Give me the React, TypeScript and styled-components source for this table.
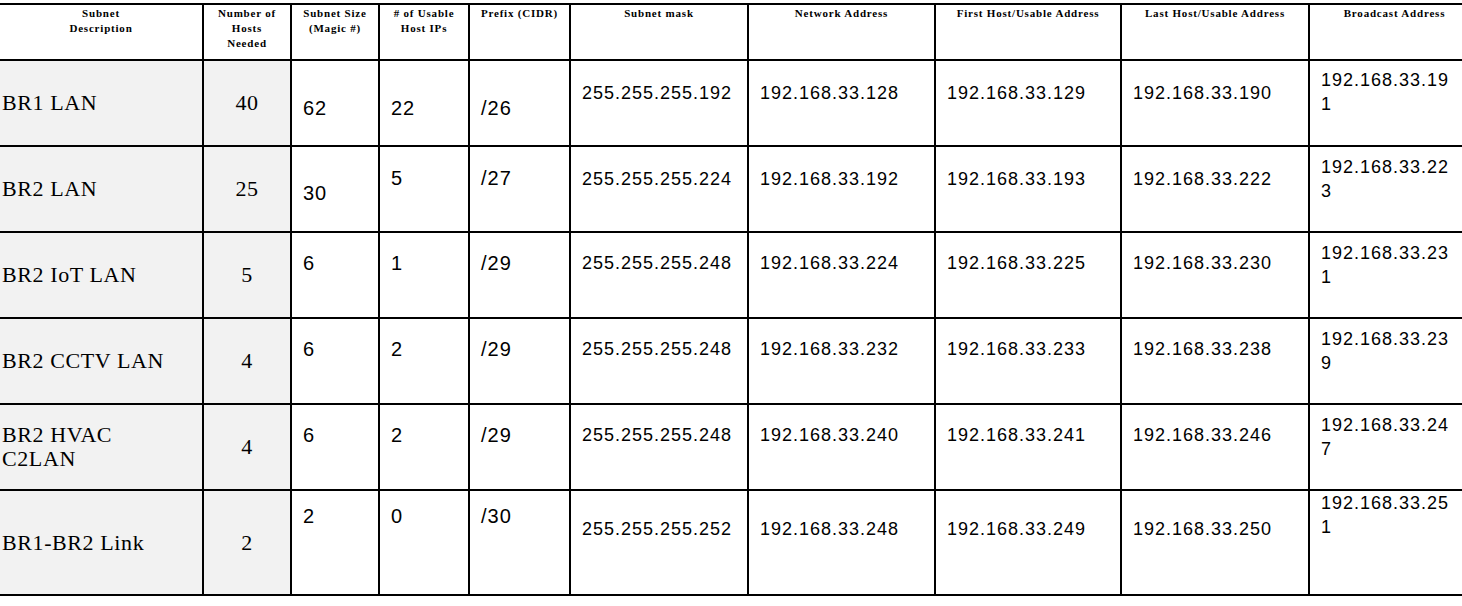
import styled, { createGlobalStyle } from 'styled-components';

const GlobalStyle = createGlobalStyle`
  html, body {
    margin: 0;
    padding: 0;
    background: #ffffff;
    overflow: hidden;
  }
`;

type Subnet = {
  desc: string[];
  hosts: string;
  size: string;
  usable: string;
  prefix: string;
  mask: string;
  network: string;
  first: string;
  last: string;
  broadcast: string;
  height: number;
  // vertical centre of the first text line, measured from the row's top rule
  tops: { size: number; usable: number; prefix: number; addr: number; bc: number };
};

const subnets: Subnet[] = [
  {
    desc: ['BR1 LAN'],
    hosts: '40',
    size: '62',
    usable: '22',
    prefix: '/26',
    mask: '255.255.255.192',
    network: '192.168.33.128',
    first: '192.168.33.129',
    last: '192.168.33.190',
    broadcast: '192.168.33.191',
    height: 86,
    tops: { size: 48, usable: 48, prefix: 48, addr: 33, bc: 20 },
  },
  {
    desc: ['BR2 LAN'],
    hosts: '25',
    size: '30',
    usable: '5',
    prefix: '/27',
    mask: '255.255.255.224',
    network: '192.168.33.192',
    first: '192.168.33.193',
    last: '192.168.33.222',
    broadcast: '192.168.33.223',
    height: 86,
    tops: { size: 47, usable: 32, prefix: 32, addr: 33, bc: 21 },
  },
  {
    desc: ['BR2 IoT LAN'],
    hosts: '5',
    size: '6',
    usable: '1',
    prefix: '/29',
    mask: '255.255.255.248',
    network: '192.168.33.224',
    first: '192.168.33.225',
    last: '192.168.33.230',
    broadcast: '192.168.33.231',
    height: 86,
    tops: { size: 31, usable: 31, prefix: 31, addr: 31, bc: 21 },
  },
  {
    desc: ['BR2 CCTV LAN'],
    hosts: '4',
    size: '6',
    usable: '2',
    prefix: '/29',
    mask: '255.255.255.248',
    network: '192.168.33.232',
    first: '192.168.33.233',
    last: '192.168.33.238',
    broadcast: '192.168.33.239',
    height: 86,
    tops: { size: 31, usable: 31, prefix: 31, addr: 31, bc: 21 },
  },
  {
    desc: ['BR2 HVAC', 'C2LAN'],
    hosts: '4',
    size: '6',
    usable: '2',
    prefix: '/29',
    mask: '255.255.255.248',
    network: '192.168.33.240',
    first: '192.168.33.241',
    last: '192.168.33.246',
    broadcast: '192.168.33.247',
    height: 86,
    tops: { size: 31, usable: 31, prefix: 31, addr: 31, bc: 21 },
  },
  {
    desc: ['BR1-BR2 Link'],
    hosts: '2',
    size: '2',
    usable: '0',
    prefix: '/30',
    mask: '255.255.255.252',
    network: '192.168.33.248',
    first: '192.168.33.249',
    last: '192.168.33.250',
    broadcast: '192.168.33.251',
    height: 105,
    tops: { size: 26, usable: 26, prefix: 26, addr: 39, bc: 13 },
  },
];

const columns = [
  { label: ['Subnet', 'Description'], width: 203 },
  { label: ['Number of', 'Hosts', 'Needed'], width: 88 },
  { label: ['Subnet Size', '(Magic #)'], width: 88 },
  { label: ['# of Usable', 'Host IPs'], width: 90 },
  { label: ['Prefix (CIDR)'], width: 101 },
  { label: ['Subnet mask'], width: 178 },
  { label: ['Network Address'], width: 187 },
  { label: ['First Host/Usable Address'], width: 186 },
  { label: ['Last Host/Usable Address'], width: 188 },
  { label: ['Broadcast Address'], width: 170 },
];

const Table = styled.table`
  margin-top: 3px;
  border-collapse: collapse;
  table-layout: fixed;
  width: ${columns.reduce((s, c) => s + c.width, 0)}px;
  color: #000;

  th,
  td {
    border: 2px solid #000;
  }
  th:first-child,
  td:first-child {
    border-left: none;
  }
  th:last-child,
  td:last-child {
    border-right: none;
  }
`;

const HeadRow = styled.tr`
  height: 56px;
`;

const HeadCell = styled.th`
  padding: 1px 4px 0;
  vertical-align: top;
  text-align: center;
  font-family: 'Liberation Serif', 'Times New Roman', serif;
  font-weight: 700;
  font-size: 11px;
  line-height: 15px;
  letter-spacing: 0.8px;
`;

const BodyRow = styled.tr<{ $height: number }>`
  height: ${(p) => p.$height}px;
`;

const DescCell = styled.td`
  background: #f2f2f2;
  padding: 0 0 0 2px;
  vertical-align: middle;
  font-family: 'Liberation Serif', 'Times New Roman', serif;
  font-size: 22px;
  line-height: 24px;
  letter-spacing: 0.6px;
`;

const HostsCell = styled(DescCell)`
  padding: 0;
  text-align: center;
`;

const ValueCell = styled.td<{ $top: number; $size?: number }>`
  padding: ${(p) => Math.max(0, p.$top - 13)}px 4px 0 11px;
  vertical-align: top;
  font-family: 'Liberation Sans', Arial, Helvetica, sans-serif;
  font-size: ${(p) => p.$size ?? 18}px;
  line-height: 24px;
  letter-spacing: 1px;
  white-space: nowrap;
`;

const BroadcastText = styled.span`
  display: block;
  width: 134px;
  white-space: normal;
  word-break: break-all;
`;

export default function App() {
  return (
    <>
      <GlobalStyle />
      <Table>
        <colgroup>
          {columns.map((c) => (
            <col key={c.label.join(' ')} style={{ width: c.width }} />
          ))}
        </colgroup>
        <thead>
          <HeadRow>
            {columns.map((c) => (
              <HeadCell key={c.label.join(' ')}>
                {c.label.map((line, i) => (
                  <span key={line}>
                    {i > 0 && <br />}
                    {line}
                  </span>
                ))}
              </HeadCell>
            ))}
          </HeadRow>
        </thead>
        <tbody>
          {subnets.map((s) => (
            <BodyRow key={s.broadcast} $height={s.height}>
              <DescCell>
                {s.desc.map((line, i) => (
                  <span key={line}>
                    {i > 0 && <br />}
                    {line}
                  </span>
                ))}
              </DescCell>
              <HostsCell>{s.hosts}</HostsCell>
              <ValueCell $top={s.tops.size} $size={20}>
                {s.size}
              </ValueCell>
              <ValueCell $top={s.tops.usable} $size={20}>
                {s.usable}
              </ValueCell>
              <ValueCell $top={s.tops.prefix} $size={20}>
                {s.prefix}
              </ValueCell>
              <ValueCell $top={s.tops.addr}>{s.mask}</ValueCell>
              <ValueCell $top={s.tops.addr}>{s.network}</ValueCell>
              <ValueCell $top={s.tops.addr}>{s.first}</ValueCell>
              <ValueCell $top={s.tops.addr}>{s.last}</ValueCell>
              <ValueCell $top={s.tops.bc}>
                <BroadcastText>{s.broadcast}</BroadcastText>
              </ValueCell>
            </BodyRow>
          ))}
        </tbody>
      </Table>
    </>
  );
}
